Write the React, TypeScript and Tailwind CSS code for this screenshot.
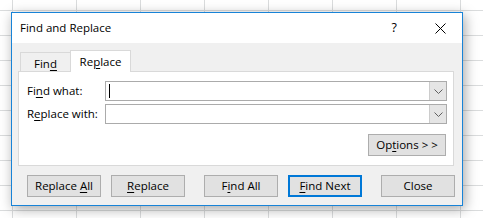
import React from "react";

const U = ({ children }: { children: React.ReactNode }) => (
  <span className="underline underline-offset-[2px] decoration-[1px]">{children}</span>
);

function Combo({ caret }: { caret?: boolean }) {
  return (
    <div className="relative flex h-[20px] w-[342px] shrink-0 border border-[#ababab] bg-white">
      <div className="relative flex-1">
        {caret && <div className="absolute left-[3px] top-[2px] h-[14px] w-px bg-black" />}
      </div>
      <div className="flex w-[17px] items-center justify-center border-l border-[#cccccc] bg-[#e5e5e5]">
        <svg width="9" height="5" viewBox="0 0 9 5" fill="none">
          <path d="M0.5 0.5 L4.5 4.5 L8.5 0.5" stroke="#606060" strokeWidth="1" />
        </svg>
      </div>
    </div>
  );
}

function Btn({ children, primary, className = "" }: { children: React.ReactNode; primary?: boolean; className?: string }) {
  return (
    <div
      className={
        "box-border flex h-[22px] w-[74px] shrink-0 items-center justify-center bg-[#e1e1e1] text-black " +
        (primary ? "border-2 border-[#0078d7] " : "border border-[#adadad] ") +
        className
      }
    >
      <span className="whitespace-pre">{children}</span>
    </div>
  );
}

export default function App() {
  return (
    <div
      className="relative h-[218px] w-[483px] overflow-hidden bg-white bg-[linear-gradient(to_right,#dadcdd_1px,transparent_1px),linear-gradient(to_bottom,#dadcdd_1px,transparent_1px)] bg-[size:64px_25px] bg-[position:12px_10px]"
      style={{ fontFamily: '"Open Sans", "Noto Sans", sans-serif' }}
    >
      <div className="absolute left-[11px] top-[12px] flex h-[194px] w-[452px] flex-col border border-[#1883d7] bg-[#f0f0f0] text-[11.5px] leading-none text-black shadow-[2px_3px_12px_rgba(0,0,0,0.35)]">
        {/* title bar */}
        <div className="flex h-[30px] shrink-0 items-center bg-white pl-[8px] pr-[16px]">
          <span className="text-[11.5px]">Find and Replace</span>
          <span className="ml-auto mr-[38px] text-[12.5px]">?</span>
          <svg width="11" height="11" viewBox="0 0 11 11">
            <path d="M0.5 0.5 L10.5 10.5 M10.5 0.5 L0.5 10.5" stroke="#000" strokeWidth="1" />
          </svg>
        </div>

        {/* tabs */}
        <div className="relative z-10 mb-[-1px] ml-[8px] mt-[7px] flex items-end">
          <div className="flex h-[20px] w-[50px] items-center justify-center border-l border-t border-[#d9d9d9] pt-[2px]">
            <span>
              Fin<U>d</U>
            </span>
          </div>
          <div className="flex h-[22px] w-[61px] items-center justify-center border-l border-r border-t border-[#d9d9d9] bg-white">
            <span>
              Re<U>p</U>lace
            </span>
          </div>
        </div>

        {/* panel */}
        <div className="ml-[6px] flex h-[95px] w-[436px] shrink-0 flex-col border border-[#d9d9d9] bg-white pl-[8px] pr-[6px] pt-[9px]">
          <div className="flex items-center">
            <span className="w-[78px] shrink-0">
              Fi<U>n</U>d what:
            </span>
            <Combo caret />
          </div>
          <div className="mt-[3px] flex items-center">
            <span className="w-[78px] shrink-0">
              R<U>e</U>place with:
            </span>
            <Combo />
          </div>
          <div className="mt-[10px] flex justify-end pr-[1px]">
            <div className="flex h-[22px] w-[78px] items-center justify-center border border-[#adadad] bg-[#e1e1e1]">
              <span className="whitespace-pre">
                Op<U>t</U>ions &gt; &gt;
              </span>
            </div>
          </div>
        </div>

        {/* buttons */}
        <div className="ml-[15px] mt-[9px] flex">
          <Btn>
            Replace <U>A</U>ll
          </Btn>
          <Btn className="ml-[10px]">
            <U>R</U>eplace
          </Btn>
          <Btn className="ml-[19px]">
            F<U>i</U>nd All
          </Btn>
          <Btn primary className="ml-[10px]">
            <U>F</U>ind Next
          </Btn>
          <Btn className="ml-[19px]">Close</Btn>
        </div>
      </div>
    </div>
  );
}
